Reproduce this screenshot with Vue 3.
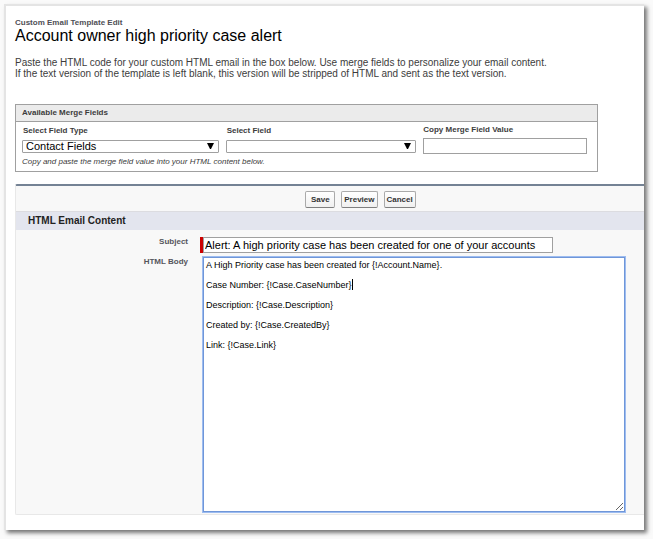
<template>
  <main class="window">
    <header class="page-header">
      <p class="kicker">Custom Email Template Edit</p>
      <h1>Account owner high priority case alert</h1>
    </header>

    <p class="intro">
      Paste the HTML code for your custom HTML email in the box below. Use merge fields to personalize your email content.<br>
      If the text version of the template is left blank, this version will be stripped of HTML and sent as the text version.
    </p>

    <section class="merge">
      <h2>Available Merge Fields</h2>
      <div class="merge-fields">
        <div class="field">
          <label for="fieldType">Select Field Type</label>
          <div class="select">
            <select id="fieldType" v-model="fieldType">
              <option v-for="t in fieldTypes" :key="t">{{ t }}</option>
            </select>
            <svg viewBox="0 0 7 6" aria-hidden="true"><path d="M0 0h7L4 6H3z" /></svg>
          </div>
        </div>
        <div class="field">
          <label for="field">Select Field</label>
          <div class="select">
            <select id="field" v-model="field">
              <option value=""></option>
            </select>
            <svg viewBox="0 0 7 6" aria-hidden="true"><path d="M0 0h7L4 6H3z" /></svg>
          </div>
        </div>
        <div class="field copy">
          <label for="mergeValue">Copy Merge Field Value</label>
          <input id="mergeValue" v-model="mergeValue" type="text">
        </div>
      </div>
      <p class="hint">Copy and paste the merge field value into your HTML content below.</p>
    </section>

    <form class="editor" @submit.prevent>
      <div class="buttons">
        <button type="submit">Save</button>
        <button type="button">Preview</button>
        <button type="button">Cancel</button>
      </div>
      <h2>HTML Email Content</h2>
      <div class="rows">
        <label for="subject">Subject</label>
        <div class="required">
          <input id="subject" v-model="subject" type="text" required>
        </div>
        <label for="body">HTML Body</label>
        <div class="body">
          <textarea id="body" v-model="body" spellcheck="false" @focus="idle = false"></textarea>
          <span v-if="idle" class="caret"></span>
        </div>
      </div>
    </form>
  </main>
</template>

<script setup>
import { ref } from 'vue';

const fieldTypes = ['Contact Fields', 'Account Fields', 'Case Fields'];
const fieldType = ref('Contact Fields');
const field = ref('');
const mergeValue = ref('');
const subject = ref('Alert: A high priority case has been created for one of your accounts');
const body = ref([
  'A High Priority case has been created for {!Account.Name}.',
  'Case Number: {!Case.CaseNumber}',
  'Description: {!Case.Description}',
  'Created by: {!Case.CreatedBy}',
  'Link: {!Case.Link}'
].join('\n\n'));

// the drawn caret gives way to the browser's own one on focus
const idle = ref(true);
</script>

<style>
body {
  background: #fafafa;
}
</style>

<style scoped>
.window {
  margin: 6px 9px 9px 6px;
  padding: 12px 0 15px 9px;
  background: #fff;
  box-shadow: -1px -1px 0 1px #e4e4e4, 2px 2px 4px 1px #777;
  font-family: "Liberation Sans", Arial, sans-serif;
  color: #3c3c3c;
}

h1, h2, p {
  margin: 0;
}

.kicker {
  font-size: 8px;
  line-height: 9px;
  font-weight: bold;
  color: #4f4f56;
}

h1 {
  font-size: 16px;
  line-height: 18px;
  font-weight: normal;
  color: #000;
}

.intro {
  margin-top: 12px;
  font-size: 10px;
  line-height: 11px;
}

.merge {
  margin: 25px 46px 0 0;
  border: 1px solid #a0a0a0;
}

.merge h2 {
  padding-left: 6px;
  border-bottom: 1px solid #a0a0a0;
  background: #ebebeb;
  font-size: 8px;
  line-height: 16px;
}

.merge-fields {
  display: grid;
  grid-template-columns: 197fr 191fr 164fr;
  gap: 7px;
  padding: 4px 10px 0 6px;
}

.field {
  display: flex;
  flex-direction: column;
}

.field label {
  padding-left: 1px;
  font-size: 8px;
  line-height: 10px;
  font-weight: bold;
}

input, select, textarea, button {
  box-sizing: border-box;
  margin: 0;
  font-family: inherit;
  color: #000;
}

.select {
  position: relative;
  margin-top: 4px;
}

.select select {
  display: block;
  width: 100%;
  height: 13px;
  padding: 0 3px;
  border: 1px solid #a0a0a0;
  border-radius: 1px;
  appearance: none;
  background: #fff;
  font-size: 11px;
  line-height: 11px;
}

.select svg {
  position: absolute;
  top: 3px;
  right: 5px;
  width: 7px;
  height: 6px;
  pointer-events: none;
}

.copy label {
  padding-left: 0;
  line-height: 8px;
}

.copy input {
  height: 16px;
  margin-top: 4px;
  padding: 0 3px;
  border: 1px solid #a0a0a0;
  font-size: 11px;
}

.hint {
  padding: 3px 6px 4px;
  font-size: 8px;
  line-height: 10px;
  font-style: italic;
}

.editor {
  margin-top: 12px;
  border: 1px solid #e8e8e8;
  border-top: 2px solid #748294;
  border-right: 0;
  border-radius: 2px 0 0 2px;
  background: #f8f8f8;
}

.buttons {
  display: flex;
  justify-content: center;
  gap: 6px;
  padding: 5px 0 3px 61px;
}

button {
  min-width: 30px;
  height: 17px;
  padding: 0 2px;
  border: 1px solid #aaa;
  border-bottom-color: #7f7f7f;
  border-radius: 2px;
  background: linear-gradient(#fff, #f0f0f0);
  font-size: 8px;
  font-weight: bold;
  color: #333;
}

.editor h2 {
  padding-left: 12px;
  border-top: 1px solid #dcdce0;
  background: #e3e5ee;
  font-size: 10px;
  line-height: 18px;
  color: #222;
}

.rows {
  display: grid;
  grid-template-columns: 172px 1fr;
  column-gap: 12px;
  row-gap: 4px;
  padding: 7px 19px 2px 0;
}

.rows label {
  font-size: 8px;
  line-height: 9px;
  font-weight: bold;
  text-align: right;
  color: #55555c;
}

.required {
  border-left: 3px solid #c00;
}

.required input {
  display: block;
  width: 83%;
  height: 16px;
  padding: 0 1px;
  border: 1px solid #a0a0a0;
  font-size: 11px;
}

.body {
  position: relative;
  margin-left: 3px;
}

.body textarea {
  display: block;
  width: 100%;
  height: 255px;
  padding: 2px;
  border: 1px solid #6f96d8;
  outline: 1px solid #9dbcf0;
  resize: vertical;
  background: #fff;
  font-size: 9px;
  line-height: 10px;
}

.caret {
  position: absolute;
  top: 22px;
  left: 149px;
  width: 1px;
  height: 11px;
  background: #000;
}
</style>
